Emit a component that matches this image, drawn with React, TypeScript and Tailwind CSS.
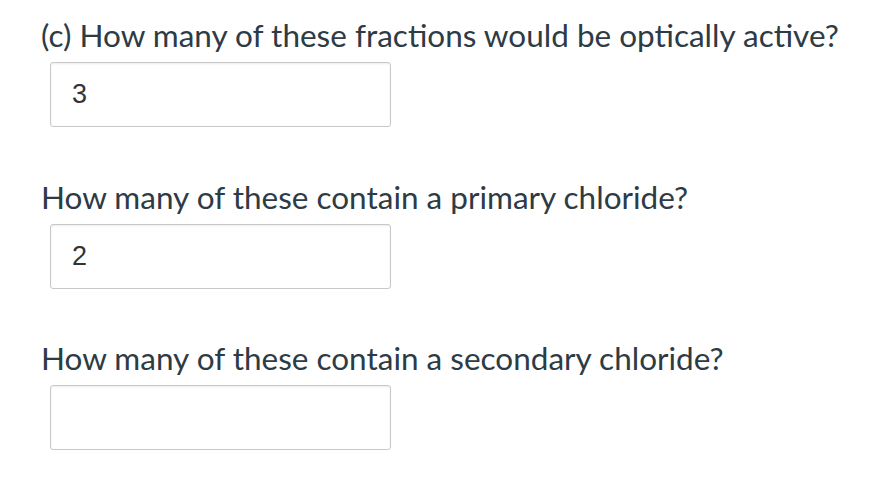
import React from 'react';

const questions = [
  { label: '(c) How many of these fractions would be optically active?', value: '3' },
  { label: 'How many of these contain a primary chloride?', value: '2' },
  { label: 'How many of these contain a secondary chloride?', value: '' },
];

export default function App() {
  return (
    <div className="w-[872px] h-[478px] bg-white pt-[16px] pl-[41px] text-[#2d3b45]" style={{ fontFamily: 'Lato, "Open Sans", sans-serif' }}>
      {questions.map((q, i) => (
        <div key={i} className={i > 0 ? 'mt-[50.5px]' : ''}>
          <p className="text-[31.5px] leading-[38px]">{q.label}</p>
          <input
            type="text"
            defaultValue={q.value}
            readOnly
            className="mt-[8px] ml-[9px] block w-[341px] h-[65px] px-[21px] border border-[#c8c8c8] rounded-[3px] shadow-[inset_0_1px_2px_rgba(0,0,0,0.08)] text-[27px] text-[#333] outline-none"
            style={{ fontFamily: '"Liberation Sans", Arial, sans-serif' }}
          />
        </div>
      ))}
    </div>
  );
}
